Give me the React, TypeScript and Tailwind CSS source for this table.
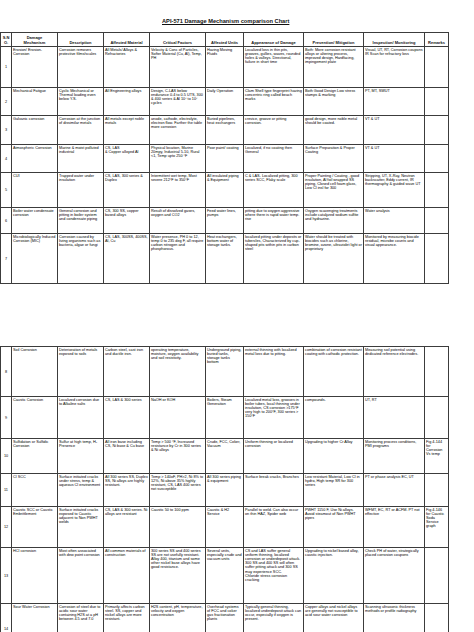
import React from "react";

type Row = { sn: string; h: string; c: string[] };

const page1: Row[] = [
  {
    sn: "1",
    h: "h-[41px]",
    c: [
      "Erosion/ Erosion-Corrosion",
      "Corrosion removes protective films/scales",
      "All Metals/ Alloys & Refractories",
      "Velocity & Conc of Particles, Softer Material (Cu, Al), Temp, PH",
      "Having Moving Fluids",
      "Localized loss in thin pits, grooves, gullies, waves, rounded holes & valleys. Directional, failure in short time",
      "Both: More corrosion resistant alloys or altering process, improved design, Hardfacing, impingement plate",
      "Visual, UT, RT, Corrosion coupons\nIR Scan for refractory loss",
      "",
    ],
  },
  {
    sn: "2",
    h: "h-[28px]",
    c: [
      "Mechanical Fatigue",
      "Cyclic Mechanical or Thermal loading even below Y.S.",
      "All Engineering alloys",
      "Design, C-LAS below endurance 0.4 to 0.5 UTS, 300 & 400 series & Al 10⁷ to 10⁷ cycles",
      "Daily Operation",
      "Clam Shell type fingerprint having concentric ring called beach marks",
      "Both Good Design       Low stress stamps & marking",
      "PT, MT, SWUT",
      "",
    ],
  },
  {
    sn: "3",
    h: "h-[29px]",
    c: [
      "Galvanic corrosion",
      "Corrosion at the junction of dissimilar metals",
      "All metals except noble metals",
      "anode, cathode, electrolyte, electron flow. Farther the table more corrosion",
      "Buried pipelines, heat exchangers",
      "crevice, groove or pitting corrosion.",
      "good design, more noble metal should be coated.",
      "VT & UT",
      "",
    ],
  },
  {
    sn: "4",
    h: "h-[28px]",
    c: [
      "Atmospheric Corrosion",
      "Marine & moist polluted industrial",
      "CS, LAS\n& Copper alloyed Al",
      "Physical location, Marine 20mpy, Industrial 5-10, Rural <1, Temp upto 250 °F",
      "Poor paint/ coating",
      "Localized, if no coating then General",
      "Surface Preparation & Proper Coating",
      "VT & UT",
      "",
    ],
  },
  {
    sn: "5",
    h: "h-[35px]",
    c: [
      "CUI",
      "Trapped water under insulation",
      "CS, LAS, 300 series & Duplex",
      "Intermittent wet temp, Most severe 212°F to 350°F",
      "All insulated piping & Equipment",
      "C & LAS- Localized pitting, 300 series SCC, Flaky scale",
      "Proper Painting / Coating , good insulation, Al foil wrapped SS piping, Closed cell foam glass, Low Cl insl for 300",
      "Stripping, UT, X-Ray, Neutron backscatter, Eddy current, IR thermography & guided wave UT",
      "",
    ],
  },
  {
    sn: "6",
    h: "h-[26px]",
    c: [
      "Boiler water condensate corrosion",
      "General corrosion and pitting in boiler system and condensate piping",
      "CS, 300 SS, copper based alloys",
      "Result of dissolved gases, oxygen and CO2",
      "Feed water lines, pumps",
      "pitting due to oxygen aggressive where there is rapid water temp. rise",
      "Oxygen scavenging treatments include catalyzed sodium sulfite and hydrazine.",
      "Water analysis",
      "",
    ],
  },
  {
    sn: "7",
    h: "h-[50px]",
    c: [
      "Microbiologically Induced Corrosion (MIC)",
      "Corrosion caused by living organisms such as bacteria, algae or fungi",
      "CS, LAS, 300SS, 400SS, Al, Cu",
      "Water presence, PH 0 to 12, temp 0 to 235 deg F, all require carbon nitrogen and phosphorous.",
      "Heat exchangers, bottom water of storage tanks.",
      "localized pitting under deposits or tubercles, Characterized by cup-shaped pits within pits in carbon steel",
      "Water should be treated with biocides such as chlorine, bromine, ozone, ultraviolet light or proprietary",
      "Monitored by measuring biocide residual, microbe counts and visual appearance.",
      "",
    ],
  },
];

const page2: Row[] = [
  {
    sn: "8",
    h: "h-[50px]",
    c: [
      "Soil Corrosion",
      "Deterioration of metals exposed to soils",
      "Carbon steel, cast iron and ductile iron.",
      "operating temperature, moisture, oxygen availability and soil resistivity.",
      "Underground piping, buried tanks, storage tanks bottom",
      "external thinning with localized metal loss due to pitting.",
      "combination of corrosion resistant coating with cathodic protection.",
      "Measuring soil potential using dedicated reference electrodes.",
      "",
    ],
  },
  {
    sn: "9",
    h: "h-[42px]",
    c: [
      "Caustic Corrosion",
      "Localized corrosion due to Alkaline salts",
      "CS, LAS & 300 series",
      "NaOH or KOH",
      "Boilers, Steam Generation",
      "Localized metal loss, grooves in boiler tubes, local thinning under insulation, CS corrosion >175°F very high to 200°F,  300 series > 150°F",
      "compounds.",
      "UT, RT",
      "",
    ],
  },
  {
    sn: "10",
    h: "h-[35px]",
    c: [
      "Sulfidation or Sulfidic Corrosion",
      "Sulfur at high temp, H₂ Presence",
      "All iron base including CS, Ni base & Cu base",
      "Temp > 500 °F, Increased resistance by Cr in 300 series & Ni alloys",
      "Crude, FCC, Coker, Vacuum",
      "Uniform thinning or localized corrosion",
      "Upgrading to higher Cr Alloy",
      "Monitoring process conditions, PMI programs",
      "Fig 4-144 for Corrosion Vs temp",
    ],
  },
  {
    sn: "11",
    h: "h-[33px]",
    c: [
      "Cl SCC",
      "Surface initiated cracks under stress, temp & aqueous Cl environment",
      "All 300 series SS, Duplex SS,      Ni alloys are highly resistant.",
      "Temp > 140oF, PH>2, Ni 8% to 12%, Ni above 35% highly resistant, CS, LAS 400 series not susceptible",
      "All 300 series piping & equipment",
      "Surface break cracks, Branches",
      "Low resistant Material, Low Cl in hydro, High temp SR for 300 series",
      "PT or phase analysis EC, UT",
      "",
    ],
  },
  {
    sn: "12",
    h: "h-[41px]",
    c: [
      "Caustic SCC or Caustic Embrittlement",
      "Surface initiated cracks exposed to Caustic adjacent to Non PWHT welds",
      "CS, LAS & 300 series. Ni alloys are resistant",
      "Caustic 50 to 100 ppm",
      "Caustic & H2 Service",
      "Parallel to weld. Can also occur on thin HAZ, Spider web",
      "PWHT 1150 F, Use Ni alloys. Avoid steamout of Non PWHT pipes",
      "WFMT, EC, RT or ACFM.  PT not effective",
      "Fig 4-146 for Caustic Soda Service graph",
    ],
  },
  {
    sn: "13",
    h: "h-[56px]",
    c: [
      "HCl corrosion",
      "Most often associated with dew point corrosion",
      "All common materials of construction",
      "300 series SS and 400 series SS are not usefully resistant. Alloy 400, titanium and some other nickel base alloys have good resistance.",
      "Several units, especially crude and vacuum units",
      "CS and LAS suffer general uniform thinning, localized corrosion or underdeposit attack. 300 SS and 400 SS will often suffer pitting attack and 300 SS may experience SCC.\nChloride stress corrosion cracking",
      "Upgrading to nickel based alloy, caustic injection.",
      "Check PH of water, strategically placed corrosion coupons",
      "",
    ],
  },
  {
    sn: "14",
    h: "h-[50px]",
    c: [
      "Sour Water Corrosion",
      "Corrosion of steel due to acidic sour water containing H2S at a pH between 4.5 and 7.0",
      "Primarily affects carbon steel. SS, copper and nickel alloys are more resistant.",
      "H2S content, pH, temperature, velocity and oxygen concentration",
      "Overhead systems of FCC and coker gas fractionation plants",
      "Typically general thinning, localized underdeposit attack can occur, especially if oxygen is present.",
      "Copper alloys and nickel alloys are generally not susceptible to acid sour water corrosion",
      "Scanning ultrasonic thickness methods or profile radiography",
      "",
    ],
  },
];

const headers = [
  "Damage Mechanism",
  "Description",
  "Affected Material",
  "Critical Factors",
  "Affected Units",
  "Appearance of Damage",
  "Prevention/ Mitigation",
  "Inspection/ Monitoring",
  "Remarks",
];

const cellCls =
  "border border-[#3c3c3c] align-top px-[1px] pt-[0.5px] text-[3.8px] leading-[4.2px] text-black whitespace-pre-line break-words overflow-hidden";

function Cols() {
  return (
    <colgroup>
      <col className="w-[11px]" />
      <col className="w-[46px]" />
      <col className="w-[46px]" />
      <col className="w-[46px]" />
      <col className="w-[56px]" />
      <col className="w-[38px]" />
      <col className="w-[60px]" />
      <col className="w-[60px]" />
      <col className="w-[61px]" />
      <col className="w-[24px]" />
    </colgroup>
  );
}

function Body({ rows }: { rows: Row[] }) {
  return (
    <tbody>
      {rows.map((r) => (
        <tr key={r.sn} className={r.h}>
          <td className="border border-[#3c3c3c] align-middle text-center text-[3.8px] leading-[4px] text-black">
            {r.sn}
          </td>
          {r.c.map((t, i) => (
            <td key={i} className={cellCls}>
              {t}
            </td>
          ))}
        </tr>
      ))}
    </tbody>
  );
}

export default function App() {
  return (
    <div
      className="w-[474px] h-[632px] overflow-hidden bg-white"
      style={{ fontFamily: '"Liberation Sans", Arial, sans-serif' }}
    >
      <div className="pt-[17px]">
        <div className="flex justify-start pl-[162px] h-[10px] mb-[5px]">
          <span className="text-[5.7px] leading-[8px] font-bold underline text-[#111] whitespace-nowrap">
            API-571 Damage Mechanism comparison Chart
          </span>
        </div>
        <table className="table-fixed border-collapse w-[448px] border-t-[1.5px] border-[#222]">
          <Cols />
          <thead>
            <tr className="h-[14px]">
              <th className="border border-[#3c3c3c] align-bottom text-center font-bold text-[4px] leading-[4.4px] pb-[1px] text-[#111]">
                S.N
                <br />
                O.
              </th>
              {headers.map((h) => (
                <th
                  key={h}
                  className="border border-[#3c3c3c] align-bottom text-center font-bold text-[4px] leading-[4.4px] pb-[1px] px-[1px] text-[#111] whitespace-nowrap"
                >
                  {h === "Damage Mechanism" ? (
                    <>
                      Damage
                      <br />
                      Mechanism
                    </>
                  ) : (
                    h
                  )}
                </th>
              ))}
            </tr>
          </thead>
          <Body rows={page1} />
        </table>
      </div>
      <div className="mt-[62px]">
        <table className="table-fixed border-collapse w-[448px]">
          <Cols />
          <Body rows={page2} />
        </table>
      </div>
    </div>
  );
}
